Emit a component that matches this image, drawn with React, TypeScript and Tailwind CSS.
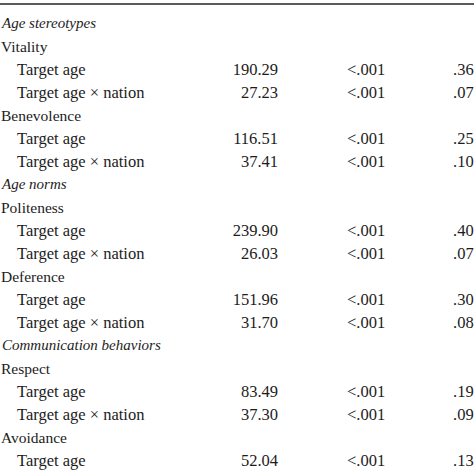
import React from 'react';

type Row =
  | { kind: 'section'; label: string }
  | { kind: 'group'; label: string }
  | { kind: 'effect'; label: string; f: string; p: string; eta: string };

const rows: Row[] = [
  { kind: 'section', label: 'Age stereotypes' },
  { kind: 'group', label: 'Vitality' },
  { kind: 'effect', label: 'Target age', f: '190.29', p: '<.001', eta: '.36' },
  { kind: 'effect', label: 'Target age × nation', f: '27.23', p: '<.001', eta: '.07' },
  { kind: 'group', label: 'Benevolence' },
  { kind: 'effect', label: 'Target age', f: '116.51', p: '<.001', eta: '.25' },
  { kind: 'effect', label: 'Target age × nation', f: '37.41', p: '<.001', eta: '.10' },
  { kind: 'section', label: 'Age norms' },
  { kind: 'group', label: 'Politeness' },
  { kind: 'effect', label: 'Target age', f: '239.90', p: '<.001', eta: '.40' },
  { kind: 'effect', label: 'Target age × nation', f: '26.03', p: '<.001', eta: '.07' },
  { kind: 'group', label: 'Deference' },
  { kind: 'effect', label: 'Target age', f: '151.96', p: '<.001', eta: '.30' },
  { kind: 'effect', label: 'Target age × nation', f: '31.70', p: '<.001', eta: '.08' },
  { kind: 'section', label: 'Communication behaviors' },
  { kind: 'group', label: 'Respect' },
  { kind: 'effect', label: 'Target age', f: '83.49', p: '<.001', eta: '.19' },
  { kind: 'effect', label: 'Target age × nation', f: '37.30', p: '<.001', eta: '.09' },
  { kind: 'group', label: 'Avoidance' },
  { kind: 'effect', label: 'Target age', f: '52.04', p: '<.001', eta: '.13' },
];

export default function App() {
  return (
    <div className="w-[474px] h-[474px] overflow-hidden bg-white text-[#1c1c1c] font-['Liberation_Serif',serif] text-[16.5px] leading-[23px]">
      <div className="mt-[3px] h-[2px] bg-[#5a5a5a]" />
      <div className="pt-[7px]">
        {rows.map((row, i) => {
          if (row.kind === 'section') {
            return (
              <div key={i} className="h-[23px] pl-[2px] text-[15px] italic whitespace-nowrap">
                {row.label}
              </div>
            );
          }
          if (row.kind === 'group') {
            return (
              <div key={i} className="h-[23px] pl-[1px] text-[15.5px] whitespace-nowrap">
                {row.label}
              </div>
            );
          }
          return (
            <div
              key={i}
              className="grid h-[23px] grid-cols-[210px_68px_175px_1fr] whitespace-nowrap"
            >
              <div className="pl-[17px]">{row.label}</div>
              <div className="text-right">{row.f}</div>
              <div className="pl-[69px]">{row.p}</div>
              <div>{row.eta}</div>
            </div>
          );
        })}
      </div>
    </div>
  );
}
